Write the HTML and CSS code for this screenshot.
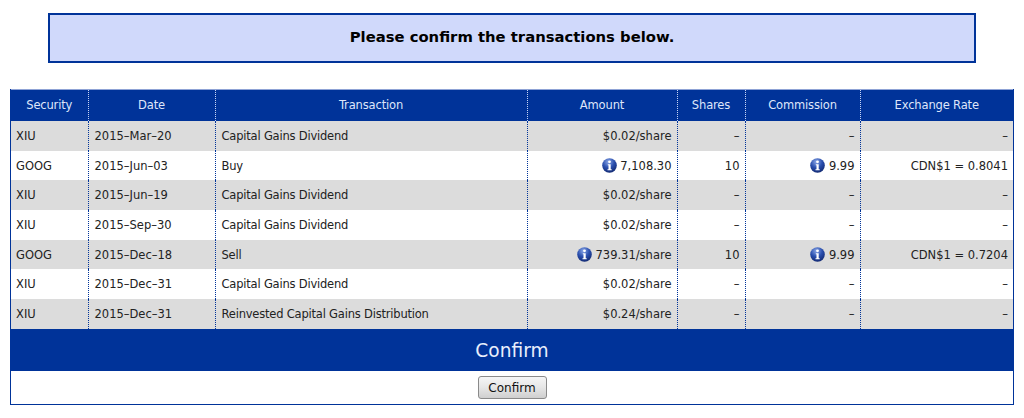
FILE: index.html
```html
<!DOCTYPE html>
<html lang="en">
<head>
<meta charset="utf-8">
<title>Confirm transactions</title>
<link rel="stylesheet" href="styles.css">
</head>
<body>
<svg class="defs" width="0" height="0" aria-hidden="true">
  <defs>
    <radialGradient id="ball" cx="42%" cy="25%" r="80%">
      <stop offset="0" stop-color="#8aa6e6"/>
      <stop offset="0.5" stop-color="#2a4fae"/>
      <stop offset="1" stop-color="#10266c"/>
    </radialGradient>
    <symbol id="info" viewBox="0 0 15 15">
      <circle cx="7.5" cy="7.5" r="7.3" fill="url(#ball)"/>
      <circle cx="7.5" cy="3.8" r="1.4" fill="#fff"/>
      <path d="M5.8 6.2h2.9v5h1v1.1H5.5v-1.1h1V7.3h-.7z" fill="#fff"/>
    </symbol>
  </defs>
</svg>
<main class="page">
  <div class="notice">Please confirm the transactions below.</div>
  <section class="panel">
    <table class="tx">
      <colgroup>
        <col class="c1"><col class="c2"><col class="c3"><col class="c4"><col class="c5"><col class="c6"><col class="c7">
      </colgroup>
      <thead>
        <tr><th>Security</th><th>Date</th><th>Transaction</th><th>Amount</th><th>Shares</th><th>Commission</th><th>Exchange Rate</th></tr>
      </thead>
      <tbody>
        <tr><td>XIU</td><td class="date">2015–Mar–20</td><td class="desc">Capital Gains Dividend</td><td class="num">$0.02/share</td><td class="num">–</td><td class="num">–</td><td class="num">–</td></tr>
        <tr><td>GOOG</td><td class="date">2015–Jun–03</td><td class="desc">Buy</td><td class="num"><svg class="ico"><use href="#info"/></svg> 7,108.30</td><td class="num">10</td><td class="num"><svg class="ico"><use href="#info"/></svg> 9.99</td><td class="num">CDN$1 = 0.8041</td></tr>
        <tr><td>XIU</td><td class="date">2015–Jun–19</td><td class="desc">Capital Gains Dividend</td><td class="num">$0.02/share</td><td class="num">–</td><td class="num">–</td><td class="num">–</td></tr>
        <tr><td>XIU</td><td class="date">2015–Sep–30</td><td class="desc">Capital Gains Dividend</td><td class="num">$0.02/share</td><td class="num">–</td><td class="num">–</td><td class="num">–</td></tr>
        <tr><td>GOOG</td><td class="date">2015–Dec–18</td><td class="desc">Sell</td><td class="num"><svg class="ico"><use href="#info"/></svg> 739.31/share</td><td class="num">10</td><td class="num"><svg class="ico"><use href="#info"/></svg> 9.99</td><td class="num">CDN$1 = 0.7204</td></tr>
        <tr><td>XIU</td><td class="date">2015–Dec–31</td><td class="desc">Capital Gains Dividend</td><td class="num">$0.02/share</td><td class="num">–</td><td class="num">–</td><td class="num">–</td></tr>
        <tr><td>XIU</td><td class="date">2015–Dec–31</td><td class="desc">Reinvested Capital Gains Distribution</td><td class="num">$0.24/share</td><td class="num">–</td><td class="num">–</td><td class="num">–</td></tr>
      </tbody>
    </table>
    <h2 class="band">Confirm</h2>
    <div class="actions"><button class="btn" type="button">Confirm</button></div>
  </section>
</main>
</body>
</html>
```
FILE: styles.css
```css
html, body { margin: 0; padding: 0; background: #fff; }
body { font-family: "DejaVu Sans", Verdana, sans-serif; font-size: 11.5px; color: #222; overflow: hidden; }
.defs { position: absolute; }
.page { padding: 13px 10px 0; }
.notice {
  box-sizing: border-box;
  width: 928px;
  height: 50px;
  margin: 0 0 26px 38px;
  border: 2px solid #003399;
  background: #d0d9fb;
  color: #000;
  font-size: 14.8px;
  font-weight: bold;
  line-height: 44px;
  text-align: center;
}
.panel {
  box-sizing: border-box;
  width: 1004px;
  border: solid #003399;
  border-width: 0 1.5px 1.5px;
}
.tx { width: 100%; border-collapse: collapse; table-layout: fixed; }
.c1 { width: 77px; } .c2 { width: 127px; } .c3 { width: 312px; } .c4 { width: 150px; }
.c5 { width: 68px; } .c6 { width: 115px; }
.tx th {
  height: 29px;
  padding: 0 0 2px;
  background: #003399;
  color: #dfe6fa;
  font-weight: normal;
  letter-spacing: -0.15px;
  text-align: center;
  border-top: 1px solid #8fa3d6;
  border-left: 1px dotted #c9d5f5;
}
.tx td {
  height: 29.7px;
  padding: 0 5px;
  border-left: 1px dotted #003399;
  white-space: nowrap;
}
.tx th:first-child, .tx td:first-child { border-left: 0; }
.tx tbody tr:nth-child(odd) td { background: #dcdcdc; }
.tx td.date { padding-left: 6px; }
.tx td.desc { padding-left: 6px; letter-spacing: -0.2px; }
.num { text-align: right; }
.ico { width: 15px; height: 15px; vertical-align: -3px; }
.band {
  margin: 0;
  height: 42px;
  background: #003399;
  color: #e8eefc;
  font-size: 18.6px;
  font-weight: normal;
  line-height: 43px;
  text-align: center;
}
.actions { height: 33px; padding-top: 1px; box-sizing: border-box; display: flex; align-items: center; justify-content: center; }
.btn {
  width: 69px;
  height: 23px;
  padding: 0;
  font: 12px "DejaVu Sans", sans-serif;
  color: #111;
  border: 1px solid #8a8a8a;
  border-radius: 3px;
  background: linear-gradient(#f6f6f6, #e6e6e6 50%, #cfcfcf);
}
```
